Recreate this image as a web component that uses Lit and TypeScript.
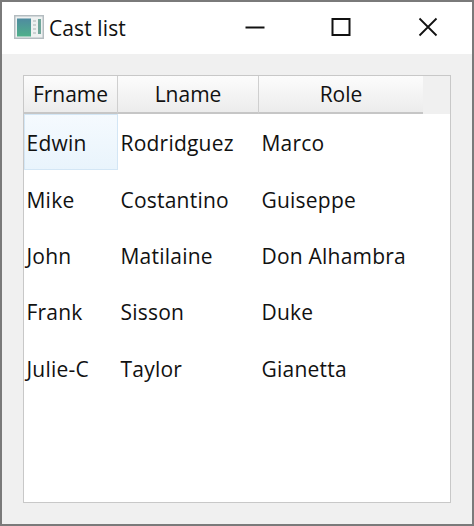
import { LitElement, html, css } from "lit";
import { customElement } from "lit/decorators.js";

const rows = [
  ["Edwin", "Rodridguez", "Marco"],
  ["Mike", "Costantino", "Guiseppe"],
  ["John", "Matilaine", "Don Alhambra"],
  ["Frank", "Sisson", "Duke"],
  ["Julie-C", "Taylor", "Gianetta"],
];
const headers = ["Frname", "Lname", "Role"];

@customElement("app-root")
export class AppRoot extends LitElement {
  static styles = css`
    :host { display: block; width: 474px; height: 526px; }
    .window {
      box-sizing: border-box; width: 474px; height: 526px;
      border: 2px solid #7a7a7a; display: flex; flex-direction: column;
      font-family: "Open Sans", "Noto Sans", sans-serif; color: #111;
      background: #f0f0f0;
    }
    .titlebar {
      height: 52px; flex: none; background: #fff; display: flex; align-items: center;
      padding-left: 12px; padding-right: 1px;
    }
    .app-icon { width: 30px; height: 24px; margin: 0 5px 2px 0; flex: none; }
    .title { font-size: 21px; flex: 1; letter-spacing: 0.1px; }
    .ctrl { width: 86px; height: 52px; flex: none; display: flex; align-items: center; justify-content: center; }
    .ctrl.min { width: 83px; }
    .ctrl.max { width: 89px; }
    .ctrl svg { width: 24px; height: 24px; display: block; }
    .content { flex: 1; padding: 21px; display: flex; }
    .table {
      flex: 1; box-sizing: border-box; border: 1px solid #c8c8c8; background: #fff;
      display: flex; flex-direction: column;
    }
    .head { display: flex; height: 38px; flex: none; background: #f0f0f0; }
    .hcell {
      box-sizing: border-box; height: 38px; font-size: 21px; display: flex;
      align-items: center; justify-content: center; flex: none;
      background: linear-gradient(#fcfcfc, #ececec);
      border-right: 1px solid #cfcfcf; border-bottom: 2px solid #c6c6c6;
    }
    .hcell:last-child { border-right: none; }
    .c0 { width: 94px; }
    .c1 { width: 141px; }
    .c2 { width: 164px; }
    .row { display: flex; height: 56.4px; flex: none; }
    .cell {
      box-sizing: border-box; font-size: 21px; letter-spacing: 0.22px; display: flex; align-items: center;
      padding: 2px 0 0 2.5px; flex: none; white-space: nowrap;
    }
    .selected {
      background: linear-gradient(#f5fafe, #e9f4fc); border: 1px solid #d3e6f5;
      padding: 1px 0 0 1.5px;
    }
  `;

  render() {
    return html`
      <div class="window">
        <div class="titlebar">
          <svg class="app-icon" viewBox="0 0 30 24">
            <defs>
              <linearGradient id="g" x1="0" y1="0" x2="0" y2="1">
                <stop offset="0" stop-color="#4f8ba0" />
                <stop offset="1" stop-color="#4fb08a" />
              </linearGradient>
            </defs>
            <rect width="30" height="24" fill="#b4bcc0" />
            <rect x="1.5" y="1.5" width="27" height="21" fill="#eef1f1" />
            <rect x="3" y="3.5" width="14" height="18" fill="url(#g)" />
            <rect x="24" y="4" width="3" height="15" fill="#6fa69a" />
            <path d="M19 6h3M19 10h3M19 14h3M19 18h3" stroke="#a9b3b3" stroke-width="1" />
          </svg>
          <div class="title">Cast list</div>
          <div class="ctrl min">
            <svg viewBox="0 0 24 24"><path d="M2.5 11.5h19" stroke="#111" stroke-width="2" fill="none" /></svg>
          </div>
          <div class="ctrl max">
            <svg viewBox="0 0 24 24"><rect x="3.5" y="3" width="17" height="16" stroke="#111" stroke-width="2" fill="none" /></svg>
          </div>
          <div class="ctrl">
            <svg viewBox="0 0 24 24"><path d="M3.5 2.5l17 17M20.5 2.5l-17 17" stroke="#111" stroke-width="1.8" fill="none" /></svg>
          </div>
        </div>
        <div class="content">
          <div class="table">
            <div class="head">
              ${headers.map((h, i) => html`<div class="hcell c${i}">${h}</div>`)}
            </div>
            ${rows.map(
              (r, ri) => html`<div class="row">
                ${r.map(
                  (c, ci) =>
                    html`<div class="cell c${ci} ${ri === 0 && ci === 0 ? "selected" : ""}">${c}</div>`
                )}
              </div>`
            )}
          </div>
        </div>
      </div>
    `;
  }
}
